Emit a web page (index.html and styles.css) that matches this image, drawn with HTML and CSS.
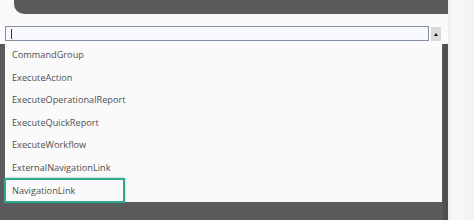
FILE: index.html
```html
<!DOCTYPE html>
<html lang="en">
<head>
    <meta charset="UTF-8">
    <title>Command type</title>
    <link rel="stylesheet" href="styles.css">
</head>
<body>
    <div class="stage">
        <!-- top bar -->
        <div class="topbar">
            <div class="band"></div>
        </div>

        <!-- search box -->
        <div class="search-panel">
            <div class="search-box"><span class="caret"></span></div>
            <button class="toggle" aria-label="close"><span class="arrow"></span></button>
        </div>

        <!-- dropdown -->
        <div class="body">
            <ul class="list">
                <li class="item">CommandGroup</li>
                <li class="item">ExecuteAction</li>
                <li class="item">ExecuteOperationalReport</li>
                <li class="item">ExecuteQuickReport</li>
                <li class="item">ExecuteWorkflow</li>
                <li class="item">ExternalNavigationLink</li>
                <li class="item selected">NavigationLink</li>
            </ul>
            <div class="gutter"></div>
        </div>
    </div>
    <div class="side"></div>
</body>
</html>
```

FILE: styles.css
```css
/* base */
body {
    margin: 0;
    width: 474px;
    height: 220px;
    display: flex;
    overflow: hidden;
    background: #5b5b5b;
    font-family: "Open Sans", "Noto Sans", sans-serif;
    color: #505050;
}

.stage {
    width: 448px;
    display: flex;
    flex-direction: column;
}

/* top bar */
.topbar {
    height: 14px;
    background: #fafafa;
    display: flex;
}
.band {
    flex: 1;
    margin-left: 14px;
    background: #5b5b5b;
    border-bottom-left-radius: 10px;
}

/* search */
.search-panel {
    height: 30px;
    box-sizing: border-box;
    padding: 12px 0 0 5px;
    background: #fafafa;
    display: flex;
    align-items: flex-start;
}
.search-box {
    width: 424px;
    height: 15px;
    box-sizing: border-box;
    border: 1px solid #8390a4;
    background: #f8fafd;
    padding: 2px 0 0 5px;
}
.caret {
    display: block;
    width: 1px;
    height: 10px;
    background: #333;
}
.toggle {
    width: 10px;
    height: 14px;
    margin: 1px 0 0 2px;
    padding: 0;
    border: none;
    background: #d9d9d9;
    display: flex;
    align-items: center;
    justify-content: center;
}
.arrow {
    width: 0;
    height: 0;
    border-left: 2.5px solid transparent;
    border-right: 2.5px solid transparent;
    border-bottom: 3px solid #111;
}

/* list */
.body {
    flex: 1;
    display: flex;
}
.list {
    list-style: none;
    margin: 0 0 0 5px;
    padding: 0;
    width: 437px;
    height: 158px;
    background: #fafafa;
}
.item {
    height: 22.6px;
    line-height: 22.6px;
    padding-left: 7px;
    font-size: 9.2px;
    white-space: nowrap;
}
.item.selected {
    position: relative;
}
.item.selected::after {
    content: "";
    position: absolute;
    left: -1px;
    top: -2px;
    width: 121px;
    bottom: -1px;
    box-sizing: border-box;
    border: 2px solid #2fa88c;
    box-shadow: 0 0 2px rgba(40, 150, 120, 0.5);
}
.gutter {
    width: 5px;
    margin-left: 1px;
    background: #4f4f4f;
}

.side {
    flex: 1;
    background: linear-gradient(to right, #e9e9e9, #f7f7f7 4px, #f3f3f3);
}
```
